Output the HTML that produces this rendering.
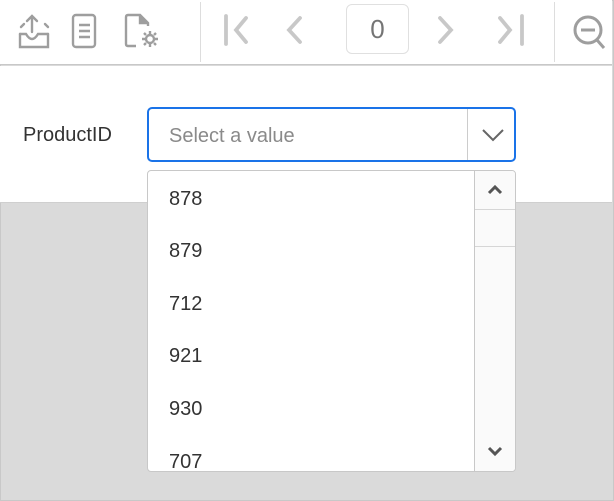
<!DOCTYPE html>
<html><head><style>
*{box-sizing:border-box;margin:0;padding:0}
body{width:614px;height:501px;overflow:hidden;background:#fff;font-family:"Liberation Sans",Roboto,sans-serif;position:relative}
.frame{position:absolute;left:0;top:0;width:614px;height:501px;border:1px solid #c8c8c8;background:#dadada}
.tb{position:absolute;left:0;top:0;width:612px;height:65px;background:#fff;border-bottom:1px solid #c8c8c8}
.white{position:absolute;left:0;top:66px;width:612px;height:137px;background:#fff;border-bottom:1px solid #cfcfcf}
.sep{position:absolute;top:2px;width:1px;height:60px;background:#ddd}
svg{position:absolute}
.pg{position:absolute;left:346px;top:4px;width:63px;height:50px;border:1px solid #e0e0e0;border-radius:6px;color:#757575;font-size:26px;text-align:center;line-height:48px}
.lbl{position:absolute;left:23px;top:124px;font-size:20px;color:#333}
.dd{position:absolute;left:147px;top:107px;width:369px;height:55px;border:2px solid #1a73e8;border-radius:5px;background:#fff}
.dd .ph{position:absolute;left:20px;top:16px;font-size:20px;color:#8a8a8a}
.dd .btn{position:absolute;left:318px;top:0;width:1px;height:51px;background:#ccc}
.list{position:absolute;left:147px;top:170px;width:369px;height:302px;border:1px solid #c8c8c8;border-radius:4px;background:#fff;overflow:hidden}
.it{position:absolute;left:21px;font-size:20px;color:#333}
.sb{position:absolute;left:326px;top:0;width:41px;height:300px;border-left:1px solid #c8c8c8;background:#fafafa}
.sb .a{position:absolute;left:0;width:40px;height:1px;background:#d6d6d6}
</style></head><body>
<div class="frame"></div>
<div class="tb">
<svg style="left:16px;top:12px" width="40" height="38" viewBox="0 0 40 38" fill="none" stroke="#9e9e9e" stroke-width="2.4" stroke-linecap="round">
<path d="M16 4v16M11 9l5-5 5 5"/><path d="M4 22v13h28V22"/><path d="M4 22h6q6 10 12 0h10"/><path d="M5 15l3-3M32 15l-3-3"/></svg>
<svg style="left:70px;top:12px" width="30" height="38" viewBox="0 0 30 38" fill="none" stroke="#9e9e9e" stroke-width="2.4"><rect x="3" y="3" width="22" height="32" rx="3"/><path d="M9 13h11M9 19h11M9 25h11"/></svg>
<svg style="left:122px;top:12px" width="40" height="38" viewBox="0 0 40 38" fill="none" stroke="#9e9e9e" stroke-width="2.4"><path d="M14 34H6q-2 0-2-2V5q0-2 2-2h12l8 8v3"/><path d="M18 3v8h8" fill="#9e9e9e"/><circle cx="28" cy="27" r="4"/><path d="M28 19v3M28 32v3M20 27h3M33 27h3M22 21l2 2M32 31l2 2M22 33l2-2M32 23l2-2"/></svg>
<div class="sep" style="left:200px"></div>
<svg style="left:222px;top:14px" width="32" height="34" viewBox="0 0 32 34" fill="none" stroke="#c8c8c8" stroke-width="3.8" stroke-linecap="round"><path d="M4 2v28M24 4L14 16l10 12"/></svg>
<svg style="left:282px;top:14px" width="24" height="34" viewBox="0 0 24 34" fill="none" stroke="#c8c8c8" stroke-width="3.8" stroke-linecap="round"><path d="M18 4L7 16l11 12"/></svg>
<div class="pg">0</div>
<svg style="left:434px;top:14px" width="24" height="34" viewBox="0 0 24 34" fill="none" stroke="#c8c8c8" stroke-width="3.8" stroke-linecap="round"><path d="M6 4l11 12-11 12"/></svg>
<svg style="left:494px;top:14px" width="32" height="34" viewBox="0 0 32 34" fill="none" stroke="#c8c8c8" stroke-width="3.8" stroke-linecap="round"><path d="M6 4l10 12-10 12M28 2v28"/></svg>
<div class="sep" style="left:554px"></div>
<svg style="left:570px;top:12px" width="44" height="40" viewBox="0 0 44 40" fill="none" stroke="#9e9e9e" stroke-width="3"><circle cx="18" cy="18" r="13"/><path d="M11 18h14M27 28l7 8"/></svg>
</div>
<div class="white"></div>
<div class="lbl">ProductID</div>
<div class="dd"><div class="ph">Select a value</div><div class="btn"></div>
<svg style="left:332px;top:16px" width="24" height="18" viewBox="0 0 24 18" fill="none" stroke="#666" stroke-width="2"><path d="M2 5l10 10 10-10"/></svg></div>
<div class="list">
<div class="it" style="top:17px">878</div>
<div class="it" style="top:69px">879</div>
<div class="it" style="top:122px">712</div>
<div class="it" style="top:174px">921</div>
<div class="it" style="top:227px">930</div>
<div class="it" style="top:280px">707</div>
<div class="sb"><div class="a" style="top:38px"></div><div class="a" style="top:75px"></div>
<svg style="left:12px;top:13px" width="16" height="12" viewBox="0 0 16 12" fill="none" stroke="#555" stroke-width="3"><path d="M2 9l6-6 6 6"/></svg>
<svg style="left:12px;top:274px" width="16" height="12" viewBox="0 0 16 12" fill="none" stroke="#555" stroke-width="3"><path d="M2 3l6 6 6-6"/></svg>
</div></div>
</body></html>
